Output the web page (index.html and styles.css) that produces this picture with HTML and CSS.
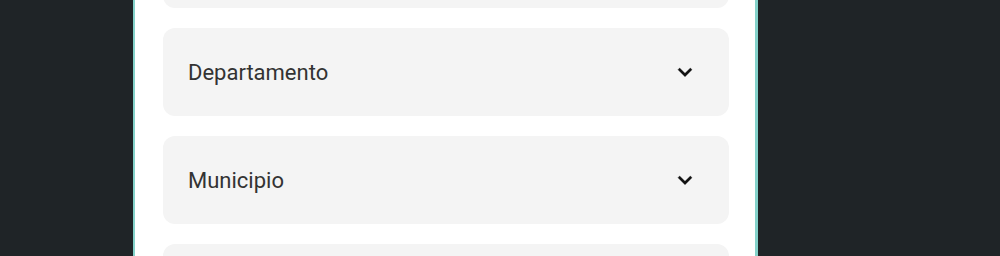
FILE: index.html
```html
<!DOCTYPE html>
<html lang="es">
<head>
<meta charset="utf-8">
<title>Formulario</title>
<link rel="stylesheet" href="styles.css">
</head>
<body>
<div class="panel">
  <div class="fields">
    <div class="select"></div>
    <div class="select"><span class="label">Departamento</span><svg class="chev" viewBox="0 0 24 24"><path d="M16.59 8.59L12 13.17 7.41 8.59 6 10l6 6 6-6z"/></svg></div>
    <div class="select"><span class="label">Municipio</span><svg class="chev" viewBox="0 0 24 24"><path d="M16.59 8.59L12 13.17 7.41 8.59 6 10l6 6 6-6z"/></svg></div>
    <div class="select"></div>
  </div>
</div>
</body>
</html>
```
FILE: styles.css
```css
html, body {
  margin: 0;
  height: 100%;
  overflow: hidden;
}
body {
  background: #1f2427;
  font-family: Roboto, "Liberation Sans", sans-serif;
}
.panel {
  margin-left: 133px;
  width: 566px;
  height: 100%;
  overflow: hidden;
  background: #ffffff;
  border-left: 2px solid #84d2ca;
  border-right: 3px solid #84d2ca;
  padding: 0 26px 0 28px;
}
.fields {
  display: flex;
  flex-direction: column;
  gap: 20px;
  margin-top: -80px;
}
.select {
  flex: none;
  height: 88px;
  background: #f4f4f4;
  border-radius: 12px;
  display: flex;
  align-items: center;
  justify-content: space-between;
  padding: 0 30px 0 25px;
}
.label {
  font-size: 22px;
  color: #333333;
}
.chev {
  width: 28px;
  height: 28px;
  fill: #111111;
  stroke: #111111;
  stroke-width: 0.3;
}
```
